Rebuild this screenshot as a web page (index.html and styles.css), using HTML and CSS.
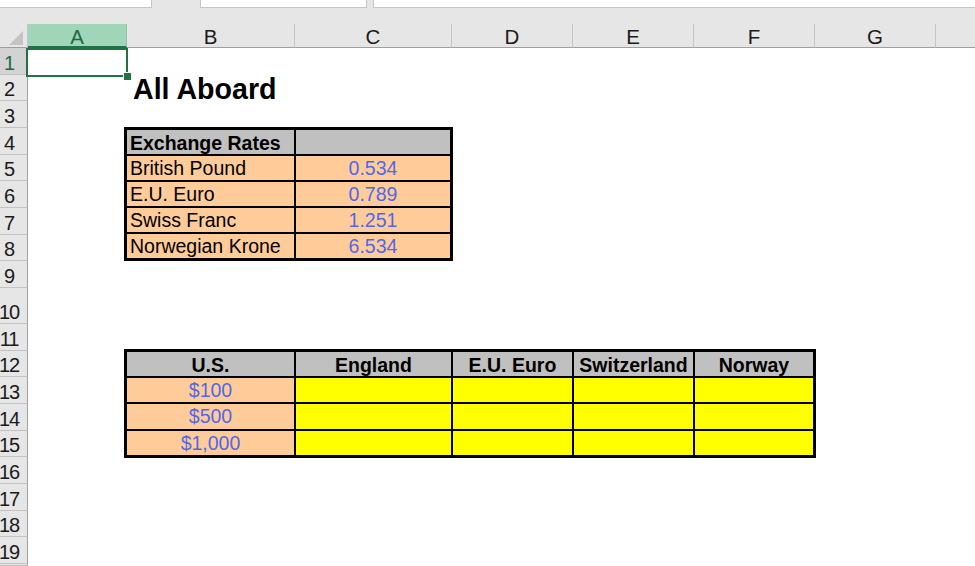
FILE: index.html
```html
<!DOCTYPE html>
<html>
<head>
<meta charset="utf-8">
<link rel="stylesheet" href="styles.css">
</head>
<body>
<div class="topbar">
  <div class="tbox namebox"></div>
  <div class="tgap"></div>
  <div class="tbox fxbox"></div>
  <div class="tbox formula"></div>
</div>
<div class="sheet">
  <div class="corner">
    <svg width="28" height="24" viewBox="0 0 28 24"><polygon points="9,21 23,21 23,7" fill="#c4c4c4"/></svg>
  </div>
  <div class="ch sel">A</div>
  <div class="ch">B</div>
  <div class="ch">C</div>
  <div class="ch">D</div>
  <div class="ch">E</div>
  <div class="ch">F</div>
  <div class="ch">G</div>
  <div class="ch last"></div>

  <div class="rh rsel r1">1</div>
  <div class="rh r2">2</div>
  <div class="rh r3">3</div>
  <div class="rh r4">4</div>
  <div class="rh r5">5</div>
  <div class="rh r6">6</div>
  <div class="rh r7">7</div>
  <div class="rh r8">8</div>
  <div class="rh r9">9</div>
  <div class="rh r10">10</div>
  <div class="rh r11">11</div>
  <div class="rh r12">12</div>
  <div class="rh r13">13</div>
  <div class="rh r14">14</div>
  <div class="rh r15">15</div>
  <div class="rh r16">16</div>
  <div class="rh r17">17</div>
  <div class="rh r18">18</div>
  <div class="rh r19">19</div>
  <div class="rh r20"></div>

  <div class="selection"><span class="handle"></span></div>

  <div class="title">All Aboard</div>

  <div class="xtable rates">
    <div class="cell hd lbl">Exchange Rates</div>
    <div class="cell hd"></div>
    <div class="cell or lbl">British Pound</div>
    <div class="cell or num">0.534</div>
    <div class="cell or lbl">E.U. Euro</div>
    <div class="cell or num">0.789</div>
    <div class="cell or lbl">Swiss Franc</div>
    <div class="cell or num">1.251</div>
    <div class="cell or lbl">Norwegian Krone</div>
    <div class="cell or num">6.534</div>
  </div>

  <div class="xtable conv">
    <div class="cell hd ctr">U.S.</div>
    <div class="cell hd ctr">England</div>
    <div class="cell hd ctr">E.U. Euro</div>
    <div class="cell hd ctr">Switzerland</div>
    <div class="cell hd ctr">Norway</div>
    <div class="cell or num">$100</div>
    <div class="cell ye"></div>
    <div class="cell ye"></div>
    <div class="cell ye"></div>
    <div class="cell ye"></div>
    <div class="cell or num">$500</div>
    <div class="cell ye"></div>
    <div class="cell ye"></div>
    <div class="cell ye"></div>
    <div class="cell ye"></div>
    <div class="cell or num">$1,000</div>
    <div class="cell ye"></div>
    <div class="cell ye"></div>
    <div class="cell ye"></div>
    <div class="cell ye"></div>
  </div>
</div>
</body>
</html>
```

FILE: styles.css
```css
* { box-sizing: border-box; }
html, body {
  margin: 0;
  padding: 0;
  width: 975px;
  height: 566px;
  overflow: hidden;
  background: #ffffff;
  font-family: "Liberation Sans", Arial, sans-serif;
}

.topbar {
  display: flex;
  height: 24px;
  background: #e6e6e6;
  align-items: flex-start;
}
.tbox {
  height: 8px;
  background: #ffffff;
  border-bottom: 1px solid #c6c6c6;
}
.namebox { width: 152px; border-right: 1px solid #c6c6c6; }
.tgap { width: 48px; }
.fxbox { width: 167px; border-left: 1px solid #c6c6c6; border-right: 1px solid #c6c6c6; }
.formula { flex: 1; margin-left: 6px; border-left: 1px solid #c6c6c6; }

.sheet {
  display: grid;
  grid-template-columns: 28px 99px 168px 157px 121px 121px 121px 121px 1fr;
  grid-template-rows: 24px repeat(9, 26.667px) 36px repeat(9, 26.667px) 1fr;
  height: 542px;
  overflow: hidden;
  background: #ffffff;
}

.corner {
  grid-row: 1;
  grid-column: 1;
  background: #e6e6e6;
  border-right: 1px solid #c6c6c6;
  border-bottom: 1px solid #9e9e9e;
}
.corner svg { display: block; }

.ch {
  grid-row: 1;
  background: #e6e6e6;
  border-right: 1px solid #c6c6c6;
  border-bottom: 1px solid #9e9e9e;
  font-size: 20.5px;
  line-height: 23px;
  padding-top: 1px;
  text-align: center;
  color: #1a1a1a;
}
.ch.last { border-right: none; }
.ch.sel {
  background: #a0d6b8;
  color: #1d6a3e;
  border-bottom: 2px solid #217346;
  border-right: 1px solid #8fc4a6;
}

.rh {
  grid-column: 1;
  background: #e6e6e6;
  border-bottom: 1px solid #c2c2c2;
  border-right: 1px solid #a0a0a0;
  display: flex;
  align-items: flex-end;
  justify-content: center;
  padding-right: 9px;
  font-size: 20px;
  line-height: 20px;
  letter-spacing: -1px;
  color: #1a1a1a;
  white-space: nowrap;
  padding-bottom: 1px;
}
.rh.rsel { background: #d3d3d3; color: #1d6a3e; }
.r1 { grid-row: 2; } .r2 { grid-row: 3; } .r3 { grid-row: 4; } .r4 { grid-row: 5; }
.r5 { grid-row: 6; } .r6 { grid-row: 7; } .r7 { grid-row: 8; } .r8 { grid-row: 9; }
.r9 { grid-row: 10; } .r10 { grid-row: 11; } .r11 { grid-row: 12; } .r12 { grid-row: 13; }
.r13 { grid-row: 14; } .r14 { grid-row: 15; } .r15 { grid-row: 16; } .r16 { grid-row: 17; }
.r17 { grid-row: 18; } .r18 { grid-row: 19; } .r19 { grid-row: 20; } .r20 { grid-row: 21; }

.selection {
  grid-row: 2;
  grid-column: 2;
  margin: 0 -1px -2px -2px;
  border: 2px solid #217346;
  position: relative;
  z-index: 3;
}
.handle {
  position: absolute;
  right: -6px;
  bottom: -6px;
  width: 9px;
  height: 9px;
  background: #217346;
  border: 1px solid #ffffff;
}

.title {
  grid-row: 3;
  grid-column: 3 / span 3;
  display: flex;
  align-items: flex-end;
  padding-left: 6px;
  font-weight: bold;
  font-size: 28.6px;
  line-height: 24px;
  color: #000000;
  white-space: nowrap;
}

.xtable {
  display: grid;
  gap: 2px;
  background: #000000;
  border: 3px solid #000000;
  z-index: 2;
}
.rates {
  grid-row: 5 / span 5;
  grid-column: 3 / span 2;
  margin: -1px -1px 0 -3px;
  grid-template-columns: 167px 1fr;
  grid-template-rows: repeat(5, 1fr);
}
.conv {
  grid-row: 13 / span 4;
  grid-column: 3 / span 5;
  margin: -2px -1px -1px -3px;
  grid-template-columns: 167px 155px 119px 119px 1fr;
  grid-template-rows: repeat(4, 1fr);
}

.cell {
  font-size: 19.5px;
  line-height: 24px;
  white-space: nowrap;
  overflow: hidden;
  color: #000000;
}
.hd {
  background: #c0c0c0;
  font-weight: bold;
  line-height: 22px;
  padding-top: 2px;
}
.or { background: #ffcc99; }
.ye { background: #ffff00; }
.lbl { padding-left: 3px; }
.ctr { text-align: center; }
.num {
  text-align: center;
  color: #5068ea;
}
```
